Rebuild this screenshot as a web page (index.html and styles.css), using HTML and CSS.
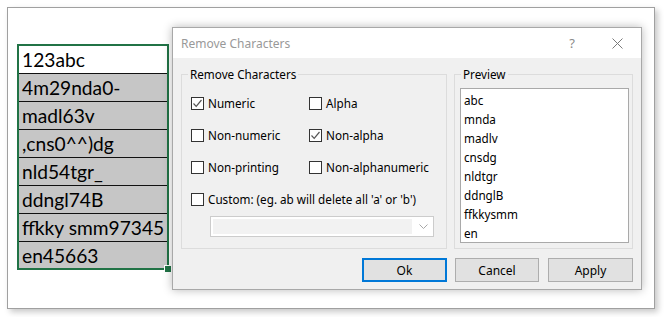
FILE: index.html
```html
<!DOCTYPE html>
<html lang="en">
<head>
  <meta charset="UTF-8" />
  <title>Remove Characters</title>
  <link rel="stylesheet" href="styles.css">
</head>
<body>
  <div class="frame">
    <div class="sheet">
      <div class="cell active">123abc</div>
      <div class="cell">4m29nda0-</div>
      <div class="cell">madl63v</div>
      <div class="cell">,cns0^^)dg</div>
      <div class="cell">nld54tgr_</div>
      <div class="cell">ddngl74B</div>
      <div class="cell">ffkky smm97345</div>
      <div class="cell last">en45663</div>
      <span class="handle"></span>
    </div>

    <div class="dialog">
      <div class="titlebar">
        <span class="title">Remove Characters</span>
        <span class="help">?</span>
        <svg class="close" width="11" height="11" viewBox="0 0 11 11">
          <path d="M0.5 0.5 L10.5 10.5 M10.5 0.5 L0.5 10.5" stroke="#7a7a7a" stroke-width="1" fill="none"/>
        </svg>
      </div>
      <div class="dlg-body">
        <div class="groups">
          <fieldset class="group options">
            <legend>Remove Characters</legend>
            <div class="checks">
              <label class="check"><span class="box"><svg width="11" height="11" viewBox="0 0 11 11"><path d="M1.5 5.5 L4.2 8.3 L9.5 2" stroke="#555" stroke-width="1.2" fill="none"/></svg></span>Numeric</label>
              <label class="check"><span class="box"></span>Alpha</label>
              <label class="check"><span class="box"></span>Non-numeric</label>
              <label class="check"><span class="box"><svg width="11" height="11" viewBox="0 0 11 11"><path d="M1.5 5.5 L4.2 8.3 L9.5 2" stroke="#555" stroke-width="1.2" fill="none"/></svg></span>Non-alpha</label>
              <label class="check"><span class="box"></span>Non-printing</label>
              <label class="check"><span class="box"></span>Non-alphanumeric</label>
              <label class="check wide"><span class="box"></span>Custom: (eg. ab will delete all 'a' or 'b')</label>
            </div>
            <div class="combo">
              <span class="field"></span>
              <svg class="chev" width="9" height="5" viewBox="0 0 9 5"><path d="M0.5 0.5 L4.5 4.5 L8.5 0.5" stroke="#a8a8a8" stroke-width="1" fill="none"/></svg>
            </div>
          </fieldset>
          <fieldset class="group preview">
            <legend>Preview</legend>
            <ul class="list">
              <li>abc</li>
              <li>mnda</li>
              <li>madlv</li>
              <li>cnsdg</li>
              <li>nldtgr</li>
              <li>ddnglB</li>
              <li>ffkkysmm</li>
              <li>en</li>
            </ul>
          </fieldset>
        </div>
        <div class="buttons">
          <button class="btn default">Ok</button>
          <button class="btn cancel">Cancel</button>
          <button class="btn">Apply</button>
        </div>
      </div>
    </div>
  </div>
</body>
</html>
```

FILE: styles.css
```css
body {
  margin: 0;
  background-color: #fff;
  font-family: "Noto Sans", sans-serif;
  font-size: 11.7px;
  color: #000;
  height: 100vh;
  overflow: hidden;
}
.frame {
  position: relative;
  margin: 7px 0 0 7px;
  width: 646px;
  height: 300px;
  border: 1px solid #a0a0a0;
  background-color: #fff;
  box-shadow: 3px 3px 6px rgba(0, 0, 0, 0.22);
}
.sheet {
  position: relative;
  margin: 36px 0 0 9px;
  width: 148px;
  border: 2px solid #217346;
  font-family: Lato, sans-serif;
  font-size: 19.2px;
}
.cell {
  height: 27px;
  line-height: 28px;
  padding-left: 3px;
  border-bottom: 1px solid #111;
  background-color: #c6c6c6;
  white-space: nowrap;
  overflow: hidden;
}
.cell.active {
  background-color: #fff;
}
.cell.last {
  height: 26px;
  border-bottom: 0;
}
.handle {
  position: absolute;
  right: -5px;
  bottom: -5px;
  width: 6px;
  height: 6px;
  background-color: #217346;
  border: 1px solid #fff;
}
.dialog {
  position: absolute;
  left: 164px;
  top: 19px;
  width: 468px;
  height: 261px;
  border: 1px solid #a8a8a8;
  background-color: #f0f0f0;
  box-shadow: 0 0 9px rgba(0, 0, 0, 0.28);
}
.titlebar {
  display: flex;
  align-items: center;
  height: 30px;
  padding-left: 8px;
  background-color: #fff;
  color: #999;
  font-size: 12px;
}
.title {
  flex: 1;
}
.help {
  margin-right: 37px;
  font-size: 13px;
  color: #8a8a8a;
}
.close {
  margin-right: 18px;
}
.dlg-body {
  padding: 8px 8px 0 8px;
}
.groups {
  display: flex;
  gap: 7px;
}
.group {
  margin: 0;
  padding: 0;
  height: 183px;
  box-sizing: border-box;
  border: 1px solid #dcdcdc;
}
.group legend {
  margin-left: 6px;
  padding: 0 2px;
  line-height: 16px;
}
.options {
  width: 266px;
}
.preview {
  width: 179px;
}
.checks {
  display: grid;
  grid-template-columns: 118px 1fr;
  grid-auto-rows: 32px;
  padding: 5px 0 0 9px;
}
.check {
  display: flex;
  align-items: center;
  gap: 4px;
  white-space: nowrap;
}
.check.wide {
  grid-column: 1 / 3;
}
.box {
  display: flex;
  align-items: center;
  justify-content: center;
  width: 11px;
  height: 11px;
  border: 1px solid #333;
  background-color: #fff;
}
.combo {
  display: flex;
  align-items: center;
  margin: 1px 0 0 28px;
  width: 222px;
  height: 19px;
  border: 1px solid #cccccc;
  background-color: #fff;
}
.combo .field {
  margin: 2px;
  flex: 1;
  height: 15px;
  background-color: #f2f2f2;
}
.chev {
  margin: 0 5px;
}
.list {
  list-style: none;
  margin: 6px 0 0 5px;
  padding: 2px 0 0 3px;
  width: 164px;
  height: 151px;
  border: 1px solid #a9a9a9;
  background-color: #fff;
}
.list li {
  line-height: 19px;
}
.buttons {
  display: flex;
  justify-content: flex-end;
  gap: 8px;
  margin-top: 9px;
}
.btn {
  width: 85px;
  height: 24px;
  font-family: "Noto Sans", sans-serif;
  font-size: 12px;
  color: #000;
  background-color: #e1e1e1;
  border: 1px solid #adadad;
  padding: 0;
}
.btn.cancel {
  width: 84px;
  margin-right: 1px;
}
.btn.default {
  border: 2px solid #0078d7;
}
```
